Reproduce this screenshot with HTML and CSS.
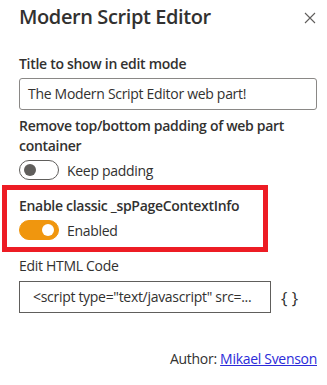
FILE: index.html
```html
<!DOCTYPE html>
<html>
	<head>
		<meta charset="UTF-8">
		<title>Modern Script Editor</title>
		<link rel="stylesheet" href="styles.css">
	</head>
	<body>
		<div class="pane">
			<div class="pane-head">
				<h1>Modern Script Editor</h1>
				<span class="close">
					<svg width="12" height="12" viewBox="0 0 12 12"><path d="M1 1L11 11M11 1L1 11" stroke="#605e5c" stroke-width="1.1" fill="none"/></svg>
				</span>
			</div>
			<div class="field">
				<label class="lbl">Title to show in edit mode</label>
				<div class="text-input">The Modern Script Editor web part!</div>
			</div>
			<div class="field field-pad">
				<label class="lbl">Remove top/bottom padding of web part container</label>
				<div class="toggle">
					<span class="switch"><span class="knob"></span></span>
					<span class="toggle-text">Keep padding</span>
				</div>
			</div>
			<div class="highlight">
				<label class="lbl">Enable classic _spPageContextInfo</label>
				<div class="toggle on">
					<span class="switch"><span class="knob"></span></span>
					<span class="toggle-text">Enabled</span>
				</div>
			</div>
			<div class="field field-code">
				<div class="plain-lbl">Edit HTML Code</div>
				<div class="code-row">
					<div class="code-box">&lt;script type="text/javascript" src=...</div>
					<span class="braces">{ }</span>
				</div>
			</div>
			<div class="author">Author: <a href="javascript:;">Mikael Svenson</a></div>
		</div>
	</body>
</html>
```
FILE: styles.css
```css
*{ margin: 0; padding: 0; box-sizing: border-box;}
body{ background: #fff; font-family: "Open Sans", "Liberation Sans", sans-serif; color: #323130; font-size: 14px;}
.pane{ padding: 3px 10px 0 19px; width: 327px;}
.pane-head{ display: flex; justify-content: space-between; align-items: flex-start;}
.pane-head h1{ font-size: 20px; font-weight: 600; line-height: 28px; letter-spacing: -0.4px;}
.close{ display: block; margin: 9px 1px 0 0; height: 12px;}
.close svg{ display: block;}
.field{ margin-top: 23px;}
.lbl{ display: block; font-weight: 600; line-height: 20px; letter-spacing: -0.3px;}
.text-input{ margin-top: 4px; height: 32px; border: 1px solid #8a8886; border-radius: 3px; padding: 0 8px; line-height: 30px; letter-spacing: -0.3px;}
.field-pad{ margin-top: 6px;}
.toggle{ display: flex; align-items: center; margin-top: 4px; height: 20px;}
.switch{ width: 40px; height: 20px; border: 1px solid #605e5c; border-radius: 10px; display: flex; align-items: center; padding: 0 4px; flex-shrink: 0;}
.knob{ width: 12px; height: 12px; border-radius: 50%; background: #605e5c;}
.toggle-text{ margin-left: 8px; letter-spacing: -0.3px;}
.toggle.on .switch{ background: #f0960e; border-color: #f0960e; justify-content: flex-end;}
.toggle.on .knob{ background: #fff;}
/*red annotation box*/
.highlight{ margin: 5px 0 0 -17px; width: 266px; border: 5px solid #ed1c24; padding: 6px 0 7px 12px;}
.field-code{ margin-top: 4px;}
.plain-lbl{ line-height: 20px; letter-spacing: -0.3px;}
.code-row{ display: flex; align-items: center; margin-top: 5px;}
.code-box{ width: 252px; height: 32px; border: 1px solid #605e5c; padding-left: 13px; line-height: 30px; letter-spacing: -0.3px; white-space: nowrap; overflow: hidden;}
.braces{ margin-left: 10px; font-size: 17px; color: #323130;}
.author{ margin-top: 36px; text-align: right; line-height: 20px; letter-spacing: -0.3px;}
.author a{ color: #2b2bd9;}
```
